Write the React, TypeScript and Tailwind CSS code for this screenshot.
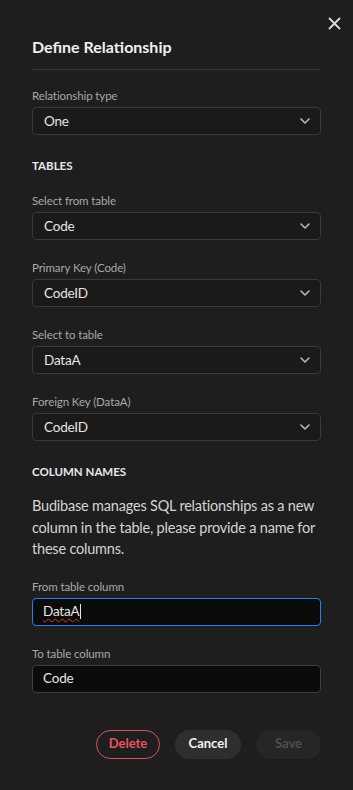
import React from 'react';

const font = { fontFamily: 'Lato, "Noto Sans", sans-serif' };

const Chevron = () => (
  <svg width="10" height="6" viewBox="0 0 10 6" className="shrink-0">
    <path d="M1 1l4 4 4-4" fill="none" stroke="#b8b8b8" strokeWidth="1.6" strokeLinecap="round" strokeLinejoin="round" />
  </svg>
);

const Label = ({ children }: { children: React.ReactNode }) => (
  <div className="text-[11.5px] leading-4 tracking-[-0.1px] text-[#a8a8a8]">{children}</div>
);

const Select = ({ label, value }: { label: string; value: string }) => (
  <div className="flex flex-col gap-[3px]">
    <Label>{label}</Label>
    <div className="flex h-[28px] items-center justify-between rounded-[4px] border border-[#393939] bg-[#1a1a1a] pl-[11px] pr-[10px]">
      <span className="text-[13.5px] tracking-[-0.2px] text-[#e4e4e4]">{value}</span>
      <Chevron />
    </div>
  </div>
);

const Heading = ({ children }: { children: React.ReactNode }) => (
  <div className="text-[11.5px] font-bold leading-4 text-[#e8e8e8]">{children}</div>
);

export default function App() {
  return (
    <div className="relative min-h-[790px] w-full bg-[#1e1e1e] px-8" style={font}>
      {/* Close */}
      <button className="absolute right-[12px] top-[17px] p-0">
        <svg width="13" height="13" viewBox="0 0 13 13">
          <path d="M1.5 1.5l10 10M11.5 1.5l-10 10" stroke="#dcdcdc" strokeWidth="1.8" strokeLinecap="round" />
        </svg>
      </button>

      <div className="pt-[35px]">
        <h1 className="h-6 text-[16px] font-bold leading-6 text-[#f0f0f0]">Define Relationship</h1>
        <div className="mt-[10px] border-t border-[#363636]" />
      </div>

      <div className="mt-[18px]">
        <Select label="Relationship type" value="One" />
      </div>

      <div className="mt-[23px]">
        <Heading>TABLES</Heading>
      </div>

      <div className="mt-[19px] flex flex-col gap-[20px]">
        <Select label="Select from table" value="Code" />
        <Select label="Primary Key (Code)" value="CodeID" />
        <Select label="Select to table" value="DataA" />
        <Select label="Foreign Key (DataA)" value="CodeID" />
      </div>

      <div className="mt-[23px]">
        <Heading>COLUMN NAMES</Heading>
      </div>

      <p className="mt-[15px] text-[14.5px] leading-[21.5px] tracking-[-0.2px] text-[#d4d4d4]">
        Budibase manages SQL relationships as a new column in the table, please provide a name for these columns.
      </p>

      <div className="mt-[19px] flex flex-col gap-[20px]">
        <div className="flex flex-col gap-[3px]">
          <Label>From table column</Label>
          <div className="flex h-[28px] items-center rounded-[4px] border border-[#2680eb] bg-[#0b0b0b] pl-[10px]">
            <span className="text-[13.5px] tracking-[-0.2px] text-[#e4e4e4] underline decoration-[#d33] decoration-wavy decoration-1 underline-offset-2">DataA</span>
            <span className="ml-[1px] h-[15px] w-px bg-[#e4e4e4]" />
          </div>
        </div>
        <div className="flex flex-col gap-[3px]">
          <Label>To table column</Label>
          <div className="flex h-[28px] items-center rounded-[4px] border border-[#3e3e3e] bg-[#0b0b0b] pl-[10px]">
            <span className="text-[13.5px] tracking-[-0.2px] text-[#e4e4e4]">Code</span>
          </div>
        </div>
      </div>

      <div className="mt-[37px] flex justify-end gap-[15px]">
        <button className="h-[29px] w-[64px] rounded-full border border-[#d9545c] text-[13px] font-bold text-[#e5555e]">
          Delete
        </button>
        <button className="h-[29px] w-[66px] rounded-full bg-[#2e2e2e] text-[13px] font-bold text-[#f2f2f2]">
          Cancel
        </button>
        <button className="h-[29px] w-[65px] rounded-full bg-[#262626] text-[13px] font-bold text-[#4e4e4e]">
          Save
        </button>
      </div>
    </div>
  );
}
